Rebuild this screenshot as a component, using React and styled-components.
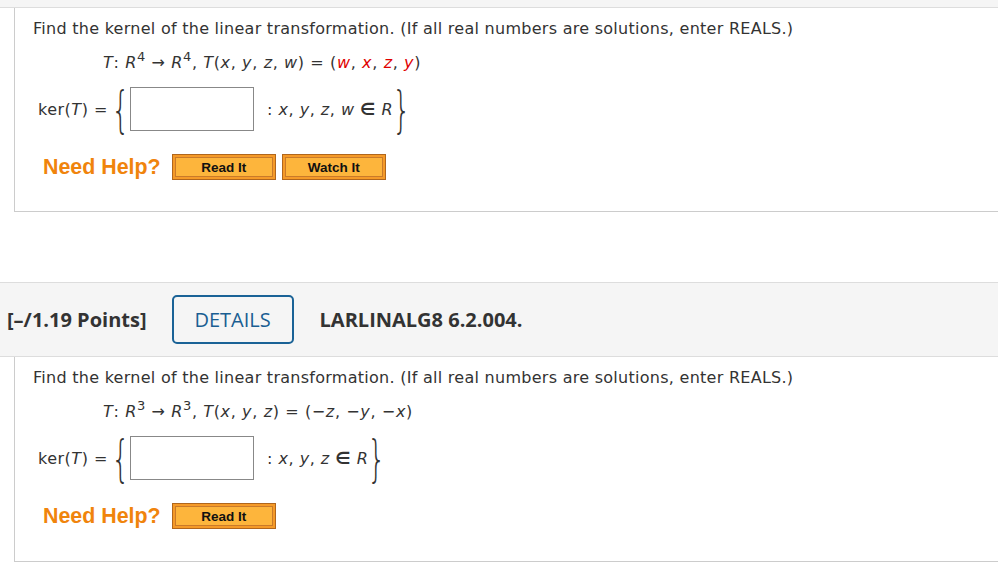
import React from 'react'
import styled, { createGlobalStyle } from 'styled-components'

const GlobalStyle = createGlobalStyle`
    html, body {
        margin:0;
        padding:0;
        background:#fff;
        overflow:hidden;
    }
    body {
        font-family:"DejaVu Sans", Verdana, sans-serif;
        color:#333;
    }
`

const Page = styled.div`
    width:998px;
    display:flex;
    flex-direction:column;
`

const TopStrip = styled.div`
    height:7px;
    background-color:#f5f5f5;
    border-bottom:1px solid #ddd;
`

const Panel = styled.div`
    margin-left:14px;
    border-left:1px solid #ccc;
    border-bottom:1px solid #ccc;
    padding:11px 0 0 18px;
    height:${({h}) => h}px;
    box-sizing:border-box;
    display:flex;
    flex-direction:column;
`

const Prompt = styled.div`
    font-size:16px;
    line-height:20px;
    color:#333;
    white-space:nowrap;
    letter-spacing:0.27px;
`

const MathLine = styled.div`
    margin:14px 0 0 70px;
    font-size:16px;
    line-height:20px;
    white-space:nowrap;
    color:#333;
    letter-spacing:0.62px;
    i { font-style:italic; }
    sup { font-size:13px; font-style:normal; vertical-align:7px; line-height:0; }
`

const Red = styled.i`
    color:#e00000;
`

const KerRow = styled.div`
    display:flex;
    align-items:center;
    margin:12px 0 0 5px;
    height:48px;
    font-size:16px;
    white-space:nowrap;
`

const KerLabel = styled.span`
    margin-right:4px;
    letter-spacing:0.5px;
`

const Brace = styled.span`
    display:inline-block;
    font-family:"DejaVu Sans", sans-serif;
    font-weight:200;
    font-size:27px;
    line-height:27px;
    transform:scale(1.05, 1.85);
    color:#333;
    margin:${({right}) => right ? '0' : '0 1px 0 0'};
`

const AnswerBox = styled.input`
    width:124px;
    height:44px;
    box-sizing:border-box;
    border:1px solid #888;
    margin:0;
    padding:0;
    outline:none;
    background:#fff;
`

const Domain = styled.span`
    margin-left:13px;
    letter-spacing:0.5px;
    i { font-style:italic; }
    b { font-weight:bold; font-size:17px; }
`

const HelpRow = styled.div`
    display:flex;
    align-items:center;
    gap:6px;
    margin:21px 0 0 10px;
`

const NeedHelp = styled.span`
    font-family:"Liberation Sans", Arial, sans-serif;
    font-weight:bold;
    font-size:21.4px;
    color:#f0840c;
    margin-right:5px;
`

const HelpButton = styled.button`
    width:104px;
    height:26px;
    box-sizing:border-box;
    border:1px solid #b0661c;
    background-color:#f59a28;
    padding:2px;
    margin:0;
    cursor:pointer;
    display:flex;
`

const HelpInner = styled.span`
    flex:1;
    display:flex;
    align-items:center;
    justify-content:center;
    border:1px solid #c97a2a;
    background-color:#fdb53c;
    font-family:"Liberation Sans", Arial, sans-serif;
    font-weight:bold;
    font-size:13.5px;
    color:#111;
`

const Gap = styled.div`
    height:70px;
`

const Header = styled.div`
    height:75px;
    box-sizing:border-box;
    background-color:#f5f5f5;
    border-top:1px solid #ddd;
    border-bottom:1px solid #ddd;
    display:flex;
    align-items:center;
    padding-left:7px;
    font-family:"Open Sans", "Noto Sans", sans-serif;
    font-size:20px;
    color:#333;
`

const Points = styled.span`
    font-weight:bold;
    margin-right:25px;
`

const DetailsButton = styled.button`
    width:122px;
    height:49px;
    box-sizing:border-box;
    border:2px solid #1a6296;
    border-radius:5px;
    background:transparent;
    color:#1a5e92;
    font-family:"Open Sans", "Noto Sans", sans-serif;
    font-size:20px;
    cursor:pointer;
    margin-right:26px;
`

const ProblemId = styled.span`
    font-weight:bold;
`

const VarList = ({ vars }) => vars.map((v, i) => (
    <React.Fragment key={v}>{i > 0 && ', '}<i>{v}</i></React.Fragment>
))

const Question = ({ dim, vars, result, buttons, h }) => (
    <Panel h={h}>
        <Prompt>
            Find the kernel of the linear transformation. (If all real numbers are solutions, enter REALS.)
        </Prompt>
        <MathLine>
            <i>T</i>: <i>R</i><sup>{dim}</sup> → <i>R</i><sup>{dim}</sup>, <i>T</i>(<VarList vars={vars} />) = ({result})
        </MathLine>
        <KerRow>
            <KerLabel>ker(<i>T</i>) =</KerLabel>
            <Brace>{'{'}</Brace>
            <AnswerBox />
            <Domain>
                : <VarList vars={vars} /> <b>∈</b> <i>R</i>
            </Domain>
            <Brace right>{'}'}</Brace>
        </KerRow>
        <HelpRow>
            <NeedHelp>Need Help?</NeedHelp>
            {buttons.map(b => (
                <HelpButton key={b}><HelpInner>{b}</HelpInner></HelpButton>
            ))}
        </HelpRow>
    </Panel>
)

const App = () => {
    return (
        <Page>
            <GlobalStyle />
            <TopStrip />
            <Question
                h={204}
                dim={4}
                vars={['x', 'y', 'z', 'w']}
                result={<><Red>w</Red>, <Red>x</Red>, <Red>z</Red>, <Red>y</Red></>}
                buttons={['Read It', 'Watch It']}
            />
            <Gap />
            <Header>
                <Points>[–/1.19 Points]</Points>
                <DetailsButton>DETAILS</DetailsButton>
                <ProblemId>LARLINALG8 6.2.004.</ProblemId>
            </Header>
            <Question
                h={205}
                dim={3}
                vars={['x', 'y', 'z']}
                result={<>−<i>z</i>, −<i>y</i>, −<i>x</i></>}
                buttons={['Read It']}
            />
        </Page>
    )
}

export default App
